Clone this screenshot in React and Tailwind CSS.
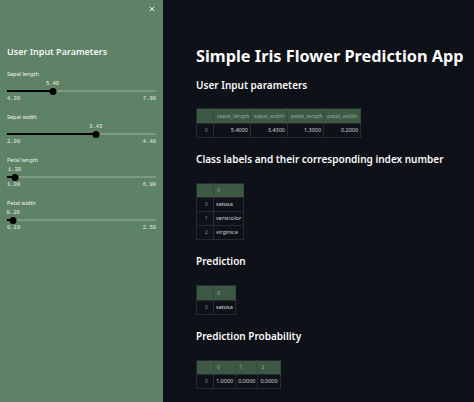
import React from 'react';
import { X } from 'lucide-react';

const sliders = [
  { label: 'Sepal length', min: 4.3, max: 7.9, value: 5.4 },
  { label: 'Sepal width', min: 2.0, max: 4.4, value: 3.43 },
  { label: 'Petal length', min: 1.0, max: 6.9, value: 1.3 },
  { label: 'Petal width', min: 0.1, max: 2.5, value: 0.2 },
];

const Slider = ({ label, min, max, value }) => {
  const pct = ((value - min) / (max - min)) * 100;
  return (
    <div className="mb-[10px]">
      <div className="h-[8px] text-[5.5px] leading-[8px] text-[#eef2ee]">{label}</div>
      <div className="relative mt-[2px] h-[8px]">
        <span
          className="absolute top-0 -translate-x-1/2 font-['Liberation_Mono',monospace] text-[5.5px] leading-[8px] text-[#f2f0d8]"
          style={{ left: `${pct}%` }}>
          {value.toFixed(2)}
        </span>
      </div>
      <div className="relative h-[6px]">
        <div className="absolute left-0 right-0 top-[2px] h-[2px] bg-[#7c9a83]" />
        <div className="absolute left-0 top-[2px] h-[2px] bg-black" style={{ width: `${pct}%` }} />
        <div
          className="absolute top-[-0.5px] h-[7px] w-[7px] -translate-x-1/2 rounded-full bg-black"
          style={{ left: `${pct}%` }} />
      </div>
      <div className="mt-[1px] flex h-[8px] justify-between font-['Liberation_Mono',monospace] text-[5.5px] leading-[8px] text-[#e6ebe4]">
        <span>{min.toFixed(2)}</span>
        <span>{max.toFixed(2)}</span>
      </div>
    </div>
  );
};

const DataTable = ({ columns, rows, widths, alignLeft }) =>
  <table className="border-collapse border border-[#252a32] text-[5.5px]">
    <thead>
      <tr className="h-[14.5px] bg-[#3d5944]">
        <th className="w-[17px] border-r border-[#34493b] p-0" />
        {columns.map((c, i) =>
        <th
          key={c}
          className="border-r border-[#34493b] p-0 pl-[3px] text-left font-normal text-[#8fab98]"
          style={{ width: widths[i] }}>
            {c}
          </th>
        )}
      </tr>
    </thead>
    <tbody>
      {rows.map((r, ri) =>
      <tr key={ri} className="h-[14px] border-t border-[#252a32]">
          <td className="p-0 pr-[5px] text-right text-[#7d828a]">{ri}</td>
          {r.map((v, ci) =>
        <td
          key={ci}
          className={`border-l border-[#252a32] px-[2px] py-0 text-[#d3d6da] ${alignLeft ? 'text-left' : 'text-right'}`}>
              {v}
            </td>
        )}
        </tr>
      )}
    </tbody>
  </table>;


export default function App() {
  return (
    <div className="flex h-[402px] w-[474px] overflow-hidden font-['Noto_Sans',sans-serif]">
      {/* Sidebar */}
      <div className="w-[163px] shrink-0 bg-[#5e8266] px-[7px]">
        <div className="flex h-[18px] justify-end pt-[5px]">
          <X size={8} strokeWidth={3} className="text-[#e8efe9]" />
        </div>
        <h2 className="mt-[28px] h-[12px] text-[9px] font-semibold leading-[12px] text-[#f5f7f5]">
          User Input Parameters
        </h2>
        <div className="mt-[12px]">
          {sliders.map((s) =>
          <Slider key={s.label} {...s} />
          )}
        </div>
      </div>

      {/* Main */}
      <div className="flex-1 bg-[#0e1117] pl-[33px] text-[#fafafa]">
        <h1 className="mt-[45px] h-[22px] text-[16.3px] font-bold leading-[22px]">
          Simple Iris Flower Prediction App
        </h1>
        <h3 className="mt-[10px] h-[16px] text-[10px] font-semibold leading-[16px]">
          User Input parameters
        </h3>
        <div className="mt-[15px]">
          <DataTable
            columns={['sepal_length', 'sepal_width', 'petal_length', 'petal_width']}
            widths={[37, 37, 36, 37]}
            rows={[['5.4000', '3.4300', '1.3000', '0.2000']]} />
        </div>
        <h3 className="mt-[13px] h-[16px] text-[10px] font-semibold leading-[16px]">
          Class labels and their corresponding index number
        </h3>
        <div className="mt-[16px]">
          <DataTable
            columns={['0']}
            widths={[30]}
            alignLeft
            rows={[['setosa'], ['versicolor'], ['virginica']]} />
        </div>
        <h3 className="mt-[13px] h-[16px] text-[10px] font-semibold leading-[16px]">Prediction</h3>
        <div className="mt-[16px]">
          <DataTable columns={['0']} widths={[21]} alignLeft rows={[['setosa']]} />
        </div>
        <h3 className="mt-[13px] h-[16px] text-[10px] font-semibold leading-[16px]">
          Prediction Probability
        </h3>
        <div className="mt-[16px]">
          <DataTable
            columns={['0', '1', '2']}
            widths={[22, 22, 22]}
            rows={[['1.0000', '0.0000', '0.0000']]} />
        </div>
      </div>
    </div>
  );
}
